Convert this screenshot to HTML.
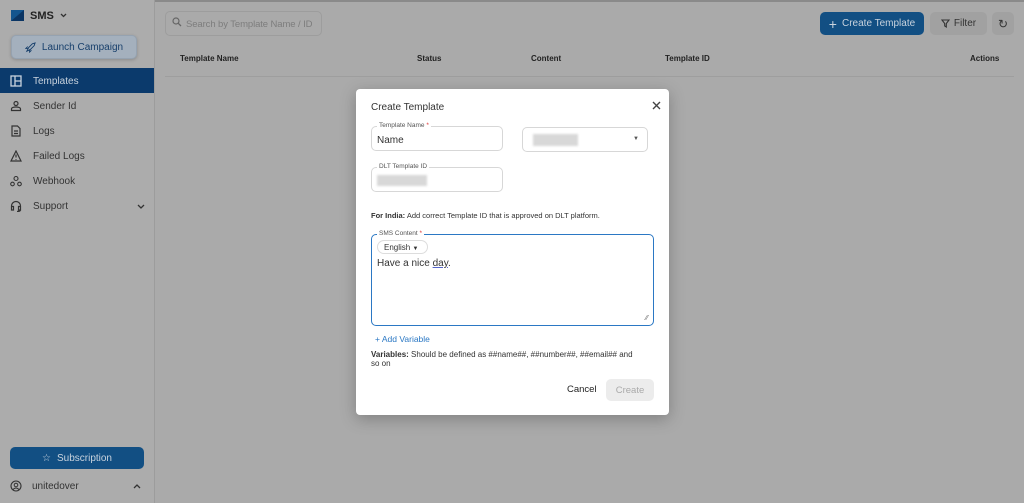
<!DOCTYPE html>
<html><head><meta charset="utf-8"><style>
*{box-sizing:border-box;margin:0;padding:0}
body{width:1024px;height:503px;overflow:hidden;background:#aaaaaa;font-family:"Liberation Sans",sans-serif;position:relative;color:#2a2a2a}
.top{position:absolute;left:0;top:0;width:1024px;height:2px;background:#8a8a8a}
.side{position:absolute;left:0;top:0;width:155px;height:503px;border-right:1px solid #9c9c9c;background:#acacac}
.nav{position:absolute;left:0;width:154px;height:25px;font-size:10px;color:#333}
.nav svg{position:absolute;left:10px;top:7px}
.nav span{position:absolute;left:33px;top:8px;line-height:12px}
.btn{position:absolute;border-radius:5px;font-size:9.5px;display:flex;align-items:center;justify-content:center}
.modal{position:absolute;left:356px;top:89px;width:313px;height:326px;background:#fff;border-radius:4px;box-shadow:0 4px 16px rgba(0,0,0,.25)}
.fld{position:absolute;border:1px solid #d7d7d7;border-radius:5px}
.lbl{position:absolute;top:-5px;left:5px;background:#fff;padding:0 2px;font-size:6.5px;color:#555;line-height:8px}
.blur{position:absolute;background:#d8d8d8;filter:blur(1px)}
.th{position:absolute;top:54px;font-size:8px;font-weight:bold;color:#222}
</style></head><body>
<div class="top"></div>
<div class="side">
 <svg style="position:absolute;left:11px;top:10px" width="13" height="11"><path d="M0 0H13V11H0Z" fill="#13558e"/><path d="M0 11L13 0V11Z" fill="#0b3563"/></svg>
 <div style="position:absolute;left:30px;top:10px;font-size:11px;font-weight:bold;color:#222">SMS</div>
 <svg style="position:absolute;left:60px;top:13px" width="7" height="5"><path d="M1 1L3.5 3.5L6 1" stroke="#333" fill="none" stroke-width="1.3"/></svg>
 <div class="btn" style="left:11px;top:35px;width:126px;height:24px;background:#a4b0bd;border:1px solid #95a2b0;box-shadow:0 1px 3px rgba(0,0,0,.2);color:#173f6b;font-size:10px">
  <svg width="11" height="11" style="margin-right:6px" viewBox="0 0 12 12"><path d="M2 10L4 6L8 2L11 1L10 4L6 8Z M3 7L1 7L3 5M5 9L5 11L7 9" stroke="#173f6b" fill="none" stroke-width="1"/></svg>Launch Campaign</div>
 <div class="nav" style="top:68px;background:#0b3a6c;color:#c9d3de"><svg width="12" height="12"><rect x="1" y="1" width="10" height="10" fill="none" stroke="#c9d3de" stroke-width="1.3"/><path d="M5 1V11M5 6H11" stroke="#c9d3de" stroke-width="1.3"/></svg><span>Templates</span></div>
 <div class="nav" style="top:93px"><svg width="12" height="12"><circle cx="6" cy="3.5" r="2" fill="none" stroke="#333" stroke-width="1.2"/><path d="M1.5 10.5H10.5V9C10.5 7.5 8 7 6 7S1.5 7.5 1.5 9Z" fill="none" stroke="#333" stroke-width="1.2"/></svg><span>Sender Id</span></div>
 <div class="nav" style="top:118px"><svg width="12" height="12"><path d="M2 1H7.5L10 3.5V11H2Z M4 6H8M4 8.5H8" fill="none" stroke="#333" stroke-width="1.2"/></svg><span>Logs</span></div>
 <div class="nav" style="top:143px"><svg width="12" height="12"><path d="M6 1L11 11H1Z M6 4.5V7.5M6 9V9.8" fill="none" stroke="#333" stroke-width="1.2"/></svg><span>Failed Logs</span></div>
 <div class="nav" style="top:168px"><svg width="12" height="12"><circle cx="6" cy="3.5" r="2" fill="none" stroke="#333" stroke-width="1.1"/><circle cx="2.5" cy="9" r="1.8" fill="none" stroke="#333" stroke-width="1.1"/><circle cx="9.5" cy="9" r="1.8" fill="none" stroke="#333" stroke-width="1.1"/></svg><span>Webhook</span></div>
 <div class="nav" style="top:193px"><svg width="12" height="12"><path d="M1.5 8V6A4.5 4.5 0 0 1 10.5 6V8M1.5 6.5H3.5V10H1.5ZM8.5 6.5H10.5V10H8.5Z M10.5 10Q10 11.5 7 11.5" fill="none" stroke="#333" stroke-width="1.2"/></svg><span>Support</span>
  <svg style="left:137px;top:11px" width="8" height="5"><path d="M1 1L4 4L7 1" stroke="#333" fill="none" stroke-width="1.3"/></svg></div>
 <div class="btn" style="left:10px;top:447px;width:134px;height:22px;background:#124f83;color:#c9d3de;font-size:10px"><span style="margin-right:6px">☆</span>Subscription</div>
 <svg style="position:absolute;left:10px;top:480px" width="12" height="12"><circle cx="6" cy="6" r="5" fill="none" stroke="#333" stroke-width="1.1"/><circle cx="6" cy="5" r="1.8" fill="none" stroke="#333"/><path d="M3 9.5Q6 6.5 9 9.5" fill="none" stroke="#333"/></svg>
 <div style="position:absolute;left:32px;top:481px;font-size:10px;color:#333">unitedover</div>
 <svg style="position:absolute;left:133px;top:484px" width="8" height="5"><path d="M1 4L4 1L7 4" stroke="#333" fill="none" stroke-width="1.3"/></svg>
</div>
<div style="position:absolute;left:165px;top:11px;width:157px;height:25px;border:1px solid #9d9d9d;border-radius:5px;font-size:9.5px;color:#7d7d7d;padding:7px 0 0 20px;white-space:nowrap;overflow:hidden;letter-spacing:-0.1px">Search by Template Name / ID</div>
<svg style="position:absolute;left:172px;top:17px" width="10" height="10"><circle cx="4" cy="4" r="3" fill="none" stroke="#666" stroke-width="1.2"/><path d="M6.3 6.3L9 9" stroke="#666" stroke-width="1.3"/></svg>
<div class="btn" style="left:820px;top:12px;width:104px;height:23px;background:#124f83;color:#c9d3de;font-size:10px"><span style="font-size:14px;margin-right:5px;line-height:10px">+</span>Create Template</div>
<div class="btn" style="left:930px;top:12px;width:57px;height:23px;background:#a1a1a1;color:#333;font-size:10px"><svg width="9" height="9" style="margin-right:4px"><path d="M1 1H8L5.3 4.5V8L3.7 7V4.5Z" fill="none" stroke="#333" stroke-width="1.1"/></svg>Filter</div>
<div class="btn" style="left:992px;top:12px;width:22px;height:23px;background:#a1a1a1;color:#333;font-size:12px">↻</div>
<div class="th" style="left:180px">Template Name</div>
<div class="th" style="left:417px">Status</div>
<div class="th" style="left:531px">Content</div>
<div class="th" style="left:665px">Template ID</div>
<div class="th" style="left:970px">Actions</div>
<div style="position:absolute;left:165px;top:76px;width:849px;height:1px;background:#9e9e9e"></div>

<div class="modal">
 <div style="position:absolute;left:15px;top:13px;font-size:10px;color:#333">Create Template</div>
 <svg style="position:absolute;left:296px;top:12px" width="9" height="9"><path d="M1 1L8 8M8 1L1 8" stroke="#444" stroke-width="1.4"/></svg>
 <div class="fld" style="left:15px;top:37px;width:132px;height:25px"><div class="lbl">Template Name <span style="color:#d33">*</span></div><div style="position:absolute;left:5px;top:8px;font-size:10px;color:#333">Name</div></div>
 <div class="fld" style="left:166px;top:38px;width:126px;height:25px"><div class="blur" style="left:10px;top:6px;width:45px;height:12px"></div><div style="position:absolute;right:8px;top:8px;font-size:6px;color:#555">▼</div></div>
 <div class="fld" style="left:15px;top:78px;width:132px;height:25px"><div class="lbl">DLT Template ID</div><div class="blur" style="left:5px;top:7px;width:50px;height:11px"></div></div>
 <div style="position:absolute;left:15px;top:122px;font-size:7.5px;color:#333"><b>For India:</b> Add correct Template ID that is approved on DLT platform.</div>
 <div class="fld" style="left:15px;top:145px;width:283px;height:92px;border:1.5px solid #2b78c4"><div class="lbl" style="top:-5px">SMS Content <span style="color:#d33">*</span></div>
  <div style="position:absolute;left:5px;top:5px;width:51px;height:14px;border:1px solid #ddd;border-radius:7px;font-size:8px;padding:2px 0 0 6px;color:#333">English <span style="font-size:6px">▼</span></div>
  <div style="position:absolute;left:5px;top:23px;font-size:10px;color:#333">Have a nice <span style="text-decoration:underline;text-decoration-color:#56c">day</span>.</div>
  <div style="position:absolute;right:5px;bottom:3px;font-size:7px;color:#666">⁄⁄</div></div>
 <div style="position:absolute;left:19px;top:245px;font-size:8.5px;color:#2b78c4">+ Add Variable</div>
 <div style="position:absolute;left:15px;top:261px;width:272px;font-size:8px;color:#333;line-height:9px"><b>Variables:</b> Should be defined as ##name##, ##number##, ##email## and so on</div>
 <div style="position:absolute;left:211px;top:295px;font-size:9.5px;color:#222">Cancel</div>
 <div class="btn" style="left:250px;top:290px;width:48px;height:22px;background:#ececec;color:#aaa">Create</div>
</div>
</body></html>
